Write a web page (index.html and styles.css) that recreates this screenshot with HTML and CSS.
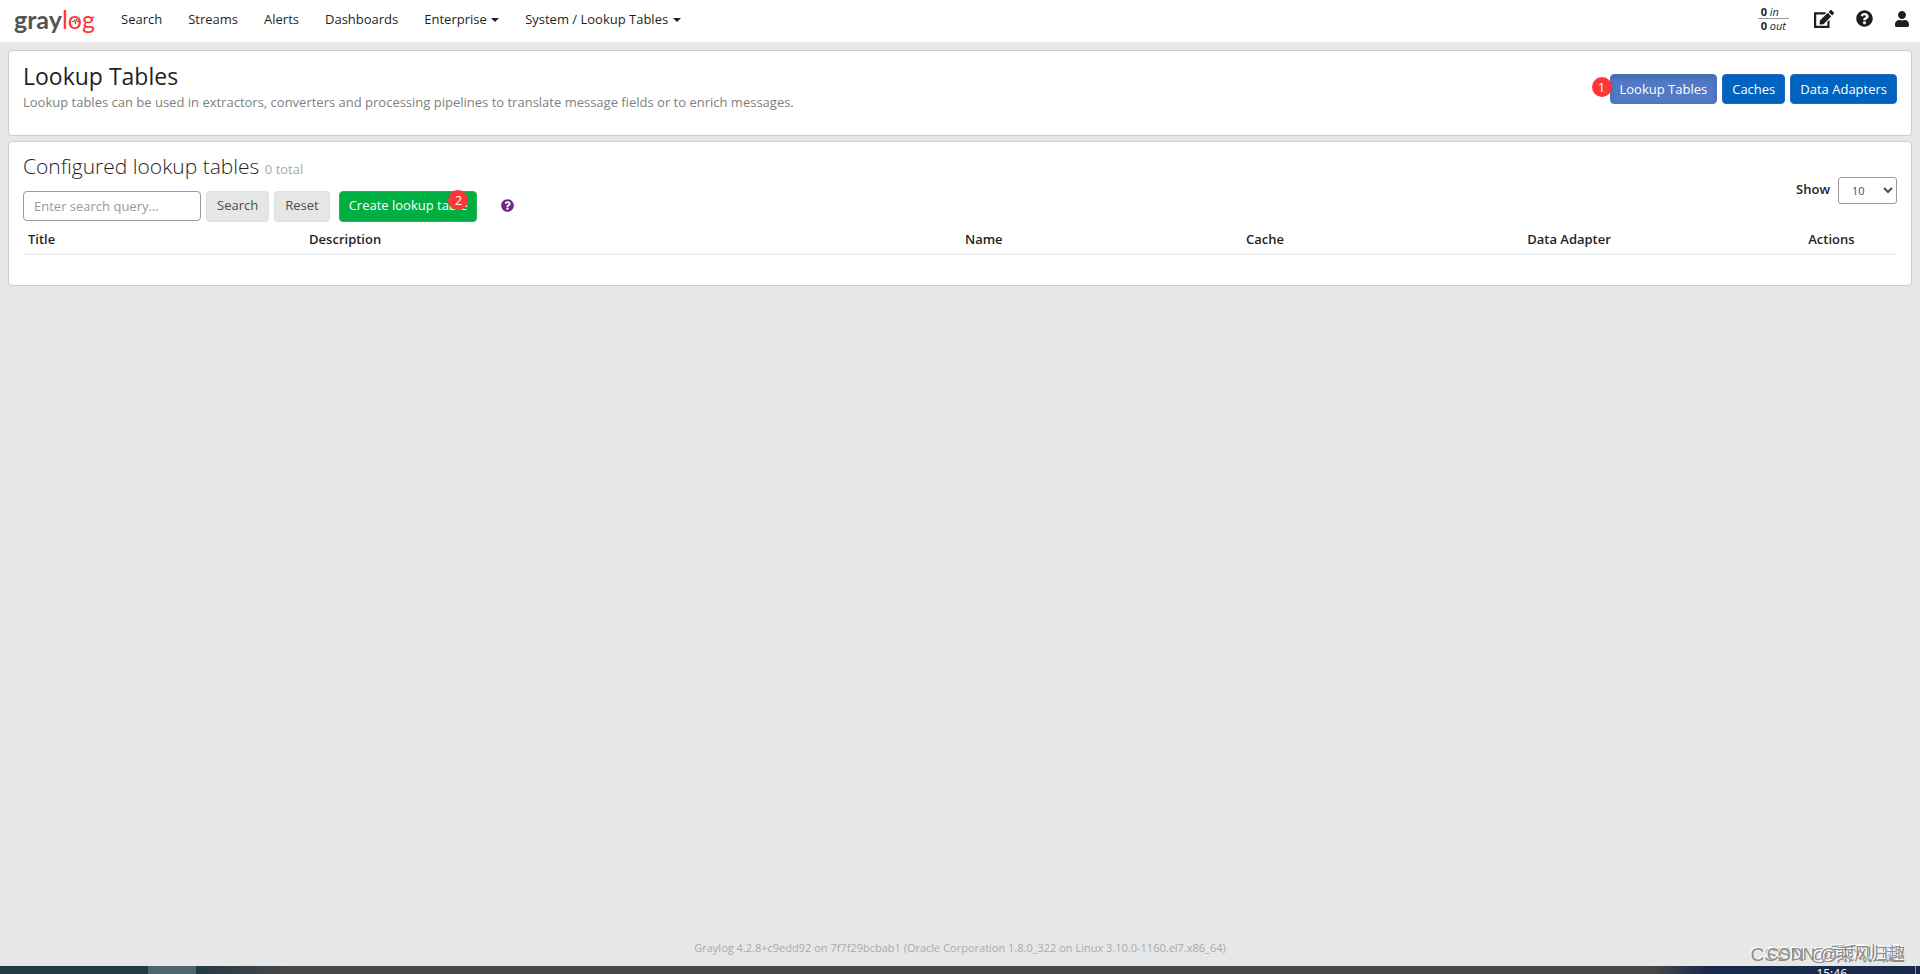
FILE: index.html
```html
<!DOCTYPE html>
<html lang="en">
<head>
  <meta charset="UTF-8" />
  <meta name="viewport" content="width=device-width, initial-scale=1.0"/>
  <title>Graylog - Lookup Tables</title>
  <link rel="stylesheet" href="styles.css">
</head>
<body>

  <nav class="navbar">
    <a href="#" class="brand">gray<span class="brand-log">l<span class="brand-o">o<svg class="pulse" viewBox="0 0 8 8"><path d="M0 4h2l1-2 1 5 1-6 1 3h2" /></svg></span>g</span></a>
    <div class="nav-links">
      <a href="#">Search</a>
      <a href="#">Streams</a>
      <a href="#">Alerts</a>
      <a href="#">Dashboards</a>
      <a href="#">Enterprise <span class="caret"></span></a>
      <a href="#">System / Lookup Tables <span class="caret"></span></a>
    </div>
    <div class="nav-right">
      <a href="#" class="throughput">
        <span class="in"><b>0</b> <i>in</i></span>
        <span><b>0</b> <i>out</i></span>
      </a>
      <a href="#" class="nav-icon" aria-label="Scratchpad">
        <svg width="20" height="18" viewBox="0 0 576 512"><path d="M402.6 83.2l90.2 90.2c3.8 3.8 3.8 10 0 13.8L274.4 405.6l-92.8 10.3c-12.4 1.4-22.9-9.1-21.5-21.5l10.3-92.8L388.8 83.2c3.8-3.8 10-3.8 13.8 0zm162-22.9l-48.8-48.8c-15.2-15.2-39.9-15.2-55.2 0l-35.4 35.4c-3.8 3.8-3.8 10 0 13.8l90.2 90.2c3.8 3.8 10 3.8 13.8 0l35.4-35.4c15.2-15.3 15.2-40 0-55.2zM384 346.2V448H64V128h229.8c3.2 0 6.2-1.3 8.5-3.5l40-40c7.6-7.6 2.2-20.5-8.5-20.5H0v448h448V306.2c0-10.7-12.9-16-20.5-8.5l-40 40c-2.2 2.3-3.5 5.3-3.5 8.5z"/></svg>
      </a>
      <a href="#" class="nav-icon" aria-label="Help">
        <svg width="17" height="17" viewBox="0 0 512 512"><path d="M504 256c0 137-111 248-248 248S8 393 8 256C8 119.1 119 8 256 8s248 111.1 248 248zM262.7 90c-54.5 0-89.3 23-116.5 63.8-3.5 5.3-2.4 12.4 2.7 16.3l34.7 26.3c5.2 3.9 12.6 3 16.7-2.1 17.9-22.7 30.1-35.8 57.3-35.8 20.4 0 45.7 13.1 45.7 33 0 15-12.4 22.7-32.5 34C247.1 238.5 216 254.9 216 296v4c0 6.6 5.4 12 12 12h56c6.6 0 12-5.4 12-12v-1.3c0-28.5 83.2-29.6 83.2-106.7 0-58-60.2-102-116.5-102zM256 338c-25.4 0-46 20.6-46 46s20.6 46 46 46 46-20.6 46-46-20.6-46-46-46z"/></svg>
      </a>
      <a href="#" class="nav-icon" aria-label="User">
        <svg width="14" height="16" viewBox="0 0 448 512"><path d="M224 256c70.7 0 128-57.3 128-128S294.7 0 224 0 96 57.3 96 128s57.3 128 128 128zm89.6 32h-16.7c-22.2 10.2-46.9 16-72.9 16s-50.6-5.8-72.9-16h-16.7C60.2 288 0 348.2 0 422.4V464c0 26.5 21.5 48 48 48h352c26.5 0 48-21.5 48-48v-41.6c0-74.2-60.2-134.4-134.4-134.4z"/></svg>
      </a>
    </div>
  </nav>

  <main class="content">
    <section class="card page-header">
      <div>
        <h1>Lookup Tables</h1>
        <p>Lookup tables can be used in extractors, converters and processing pipelines to translate message fields or to enrich messages.</p>
      </div>
      <div class="page-actions">
        <span class="marked">
          <button class="btn btn-info active">Lookup Tables</button>
          <span class="marker marker-left">1</span>
        </span>
        <button class="btn btn-info">Caches</button>
        <button class="btn btn-info">Data Adapters</button>
      </div>
    </section>

    <section class="card">
      <h2>Configured lookup tables <small>0 total</small></h2>
      <div class="toolbar">
        <form class="search-form" onsubmit="return false">
          <input type="text" class="query" placeholder="Enter search query..." aria-label="Search query" />
          <button class="btn btn-default">Search</button>
          <button type="reset" class="btn btn-default">Reset</button>
        </form>
        <span class="marked">
          <button class="btn btn-success">Create lookup table</button>
          <span class="marker marker-right">2</span>
        </span>
        <button class="help" aria-label="Search syntax help">
          <svg width="13" height="13" viewBox="0 0 512 512"><path d="M504 256c0 137-111 248-248 248S8 393 8 256C8 119.1 119 8 256 8s248 111.1 248 248zM262.7 90c-54.5 0-89.3 23-116.5 63.8-3.5 5.3-2.4 12.4 2.7 16.3l34.7 26.3c5.2 3.9 12.6 3 16.7-2.1 17.9-22.7 30.1-35.8 57.3-35.8 20.4 0 45.7 13.1 45.7 33 0 15-12.4 22.7-32.5 34C247.1 238.5 216 254.9 216 296v4c0 6.6 5.4 12 12 12h56c6.6 0 12-5.4 12-12v-1.3c0-28.5 83.2-29.6 83.2-106.7 0-58-60.2-102-116.5-102zM256 338c-25.4 0-46 20.6-46 46s20.6 46 46 46 46-20.6 46-46-20.6-46-46-46z"/></svg>
        </button>
        <div class="page-size">
          <label for="pageSize">Show</label>
          <select id="pageSize">
            <option>10</option>
            <option>50</option>
            <option>100</option>
          </select>
        </div>
      </div>
      <table>
        <thead>
          <tr>
            <th class="col">Title</th>
            <th class="col-wide">Description</th>
            <th class="col">Name</th>
            <th class="col">Cache</th>
            <th class="col">Data Adapter</th>
            <th>Actions</th>
          </tr>
        </thead>
      </table>
    </section>
  </main>

  <footer>Graylog 4.2.8+c9edd92 on 7f7f29bcbab1 (Oracle Corporation 1.8.0_322 on Linux 3.10.0-1160.el7.x86_64)</footer>

  <div class="taskbar">
    <span class="task"></span>
    <span class="clock">15:46</span>
    <span class="desktop-edge"></span>
  </div>

  <div class="watermark">CSDN @乘风归趣</div>
  <div class="watermark watermark-small">CSDN @乘风归趣</div>

</body>
</html>
```
FILE: styles.css
```css
* {
  box-sizing: border-box;
}

body {
  margin: 0;
  min-height: 100vh;
  display: flex;
  flex-direction: column;
  font-family: 'Open Sans', 'Noto Sans', sans-serif;
  font-size: 13px;
  line-height: 18px;
  color: #1f1f1f;
  background: #e7e7e7;
  position: relative;
}

a {
  color: inherit;
  text-decoration: none;
}

.navbar {
  display: flex;
  align-items: center;
  height: 42px;
  padding: 0 11px 5px 14px;
  background: #fff;
  box-shadow: 0 3px 3px #ececec;
}

.brand {
  font-family: Lato, sans-serif;
  font-size: 25px;
  line-height: 30px;
  font-weight: bold;
  color: #555;
}

.brand-log {
  font-weight: normal;
  color: #ff3633;
}

.brand-o {
  position: relative;
}

.pulse {
  position: absolute;
  left: 4px;
  top: 14px;
  width: 7px;
  height: 7px;
  fill: none;
  stroke: #555;
}

.nav-links {
  display: flex;
  gap: 26px;
  margin-left: 26px;
}

.caret {
  display: inline-block;
  margin-left: 1px;
  vertical-align: middle;
  border-top: 4px solid #1f1f1f;
  border-left: 4px solid transparent;
  border-right: 4px solid transparent;
}

.nav-right {
  display: flex;
  align-items: center;
  gap: 22px;
  margin-left: auto;
}

.throughput {
  display: flex;
  flex-direction: column;
  margin-right: 3px;
  font-size: 11px;
  line-height: 13px;
}

.throughput span {
  padding: 0 3px;
}

.throughput .in {
  border-bottom: 1px solid #999;
}

.nav-icon {
  display: flex;
}

.nav-icon svg {
  fill: #1f1f1f;
}

.content {
  display: flex;
  flex-direction: column;
  gap: 5px;
  padding: 8px;
}

.card {
  padding: 10px 14px;
  background: #fff;
  border: 1px solid #cdcdcd;
  border-radius: 4px;
}

.page-header {
  display: flex;
  justify-content: space-between;
  align-items: flex-start;
  padding-bottom: 24px;
}

h1 {
  margin: 0;
  font-size: 23px;
  line-height: 30px;
  font-weight: normal;
}

.page-header p {
  margin: 2px 0 0;
  color: #808080;
}

.page-actions {
  display: flex;
  gap: 5px;
  margin-top: 13px;
}

.btn {
  height: 30px;
  padding: 0 10px 1px;
  font: inherit;
  border: 1px solid;
  border-radius: 4px;
  cursor: pointer;
}

.btn-info,
.btn-success {
  padding: 0 9px 1px;
  color: #fff;
}

.btn-info {
  background: #0063be;
  border-color: #2368c0;
}

.btn-info.active {
  background: #5179c4;
  border-color: #4c75c2;
  box-shadow: inset 0 3px 5px rgba(0, 0, 0, 0.125);
}

.btn-default {
  color: #4d4d4d;
  background: #e6e6e6;
  border-color: #dedede;
}

.btn-success {
  background: #00ae42;
  border-color: #2bb14c;
}

.toolbar .btn {
  height: 31px;
  padding-bottom: 3px;
}

.marked {
  position: relative;
}

.marker {
  position: absolute;
  width: 20px;
  height: 20px;
  border-radius: 50%;
  background: #ff3537;
  color: #fff;
  line-height: 20px;
  text-align: center;
}

.marker-left {
  left: -18px;
  top: 3px;
}

.marker-right {
  right: 9px;
  top: -1px;
}

h2 {
  margin: 0 0 11px;
  font-size: 21px;
  line-height: 28px;
  font-weight: 300;
}

h2 small {
  font-size: 13px;
  line-height: 18px;
  font-weight: normal;
  color: #aaa;
}

.toolbar {
  display: flex;
  align-items: flex-start;
  height: 31px;
}

.search-form {
  display: flex;
  gap: 5px;
  margin-right: 9px;
}

.query {
  width: 178px;
  height: 30px;
  padding: 0 10px;
  font: inherit;
  border: 1px solid #999;
  border-radius: 4px;
}

.query::placeholder {
  color: #999;
}

.help {
  display: flex;
  margin: 8px 0 0 24px;
  padding: 0;
  border: none;
  background: none;
}

.help svg {
  fill: #702785;
}

.page-size {
  display: flex;
  align-items: flex-start;
  gap: 8px;
  margin: -14px 0 0 auto;
}

.page-size label {
  padding-top: 3px;
  font-weight: 600;
}

.page-size select {
  width: 59px;
  height: 27px;
  padding: 0 0 0 9px;
  font: inherit;
  font-size: 11px;
  color: #4d4d4d;
  background: #fff;
  border: 1px solid #999;
  border-radius: 3px;
}

table {
  width: 100%;
  margin-bottom: 20px;
  table-layout: fixed;
  border-collapse: collapse;
}

th {
  padding: 8px 5px 5px;
  text-align: left;
  font-weight: 600;
  border-bottom: 2px solid #efefef;
}

.col {
  width: 15%;
}

.col-wide {
  width: 35%;
}

footer {
  margin-top: auto;
  padding-bottom: 9px;
  text-align: center;
  font-size: 11px;
  color: #aaa;
}

.taskbar {
  display: flex;
  height: 8px;
  overflow: hidden;
  background: linear-gradient(90deg, #213a44 0, #213a44 10%, #474747 15%, #474747 86%, #18294a 89%);
}

.task {
  width: 48px;
  margin-left: 148px;
  background: #50646c;
}

.clock {
  margin-left: auto;
  font-size: 12px;
  line-height: 16px;
  color: #fff;
}

.desktop-edge {
  width: 1px;
  margin: 0 4px 0 68px;
  background: #8a94a4;
}

/* signature over the lower right corner */
.watermark {
  position: absolute;
  right: 15px;
  bottom: 8px;
  font-family: 'Liberation Sans', 'Noto Sans CJK SC', sans-serif;
  font-size: 19px;
  line-height: 22px;
  color: #8c8c8c;
  text-shadow: -1px -1px #fff;
}

.watermark-small {
  font-size: 17px;
}
```
